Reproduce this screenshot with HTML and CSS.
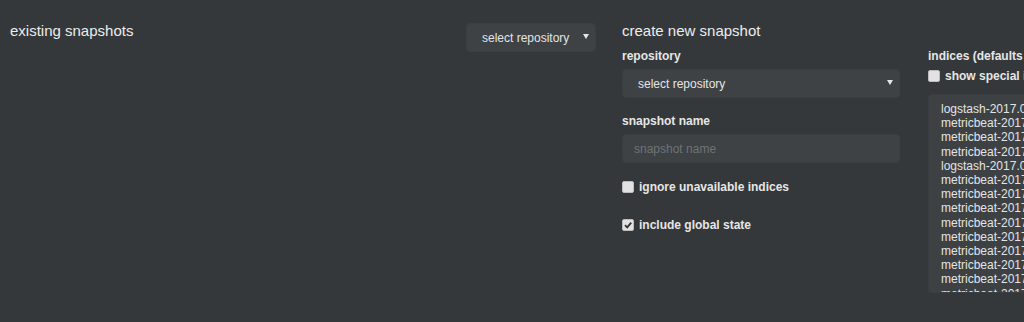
FILE: index.html
```html
<!DOCTYPE html>
<html>
<head>
<meta charset="utf-8">
<title>snapshots</title>
<link rel="stylesheet" href="styles.css">
</head>
<body>
<div class="page">
  <section class="existing">
    <h2 class="title">existing snapshots</h2>
    <div class="select select-small">
      <span>select repository</span>
      <span class="arrow"></span>
    </div>
  </section>
  <section class="create">
    <h2 class="title">create new snapshot</h2>
    <div class="cols">
      <div class="form-col">
        <div class="label">repository</div>
        <div class="select">
          <span>select repository</span>
          <span class="arrow"></span>
        </div>
        <div class="label label-gap">snapshot name</div>
        <div class="input"><span class="placeholder">snapshot name</span></div>
        <div class="check-row first-check"><span class="box"></span><span>ignore unavailable indices</span></div>
        <div class="check-row second-check"><span class="box checked"><svg viewBox="0 0 10 10" width="10" height="10"><path d="M2 5.2 L4.2 7.4 L8.2 2.6" fill="none" stroke="#333" stroke-width="1.8"/></svg></span><span>include global state</span></div>
      </div>
      <div class="indices-col">
        <div class="label">indices (defaults to all)</div>
        <div class="check-row special"><span class="box"></span><span>show special indices</span></div>
        <div class="list">
          <div class="item">logstash-2017.05.04</div>
          <div class="item">metricbeat-2017.05.02</div>
          <div class="item">metricbeat-2017.05.03</div>
          <div class="item">metricbeat-2017.05.04</div>
          <div class="item">logstash-2017.05.03</div>
          <div class="item">metricbeat-2017.05.05</div>
          <div class="item">metricbeat-2017.05.06</div>
          <div class="item">metricbeat-2017.05.07</div>
          <div class="item">metricbeat-2017.05.08</div>
          <div class="item">metricbeat-2017.05.09</div>
          <div class="item">metricbeat-2017.05.10</div>
          <div class="item">metricbeat-2017.05.11</div>
          <div class="item">metricbeat-2017.05.12</div>
          <div class="item">metricbeat-2017.05.13</div>
        </div>
      </div>
    </div>
  </section>
</div>
</body>
</html>
```
FILE: styles.css
```css
html, body {
  margin: 0;
  padding: 0;
  background: #34383b;
  overflow: hidden;
}
body {
  width: 1024px;
  height: 322px;
  font-family: "Liberation Sans", Arial, sans-serif;
  color: #e8e8e8;
}
.page {
  display: flex;
  align-items: flex-start;
  padding: 22px 0 0 10px;
  width: 1300px;
}
.title {
  margin: 0;
  font-size: 15px;
  font-weight: normal;
  line-height: 17px;
  color: #ececec;
}
.existing {
  width: 586px;
  display: flex;
  justify-content: space-between;
  align-items: flex-start;
}
.select {
  box-sizing: border-box;
  height: 29px;
  background: #3e4245;
  border: 1px solid #3b3f42;
  border-radius: 4px;
  display: flex;
  align-items: center;
  justify-content: space-between;
  padding: 0 6px 0 15px;
  font-size: 12px;
  color: #e4e4e4;
}
.select-small {
  width: 130px;
  margin-top: 1px;
}
.arrow {
  width: 0;
  height: 0;
  border-left: 3px solid transparent;
  border-right: 3px solid transparent;
  border-top: 5px solid #e6e6e6;
  margin-top: -2px;
}
.create {
  margin-left: 26px;
}
.cols {
  display: flex;
  gap: 28px;
  margin-top: 10px;
}
.form-col {
  width: 278px;
}
.indices-col {
  width: 278px;
}
.label {
  font-size: 12px;
  font-weight: bold;
  line-height: 14px;
  color: #e6e6e6;
  margin-bottom: 6px;
  white-space: nowrap;
}
.label-gap {
  margin-top: 16px;
}
.input {
  box-sizing: border-box;
  height: 29px;
  background: #3e4245;
  border: 1px solid #3b3f42;
  border-radius: 4px;
  display: flex;
  align-items: center;
  padding: 0 11px;
  font-size: 12px;
}
.placeholder {
  color: #6e7275;
}
.check-row {
  display: flex;
  align-items: center;
  gap: 5px;
  font-size: 12px;
  font-weight: bold;
  line-height: 14px;
  color: #e6e6e6;
  white-space: nowrap;
}
.first-check {
  margin-top: 17px;
}
.second-check {
  margin-top: 24px;
}
.special {
  margin-top: 0;
}
.box {
  width: 10px;
  height: 10px;
  background: #e2e2e2;
  border: 1px solid #bdbdbd;
  border-radius: 2px;
  display: flex;
  align-items: center;
  justify-content: center;
  flex: none;
}
.box svg {
  display: block;
}
.list {
  box-sizing: border-box;
  margin-top: 11px;
  height: 199px;
  background: #3d4144;
  border: 1px solid #3a3e41;
  border-radius: 4px;
  padding: 7px 12px;
  overflow: hidden;
}
.item {
  font-size: 12px;
  line-height: 14.2px;
  color: #e4e4e4;
  white-space: nowrap;
}
```
